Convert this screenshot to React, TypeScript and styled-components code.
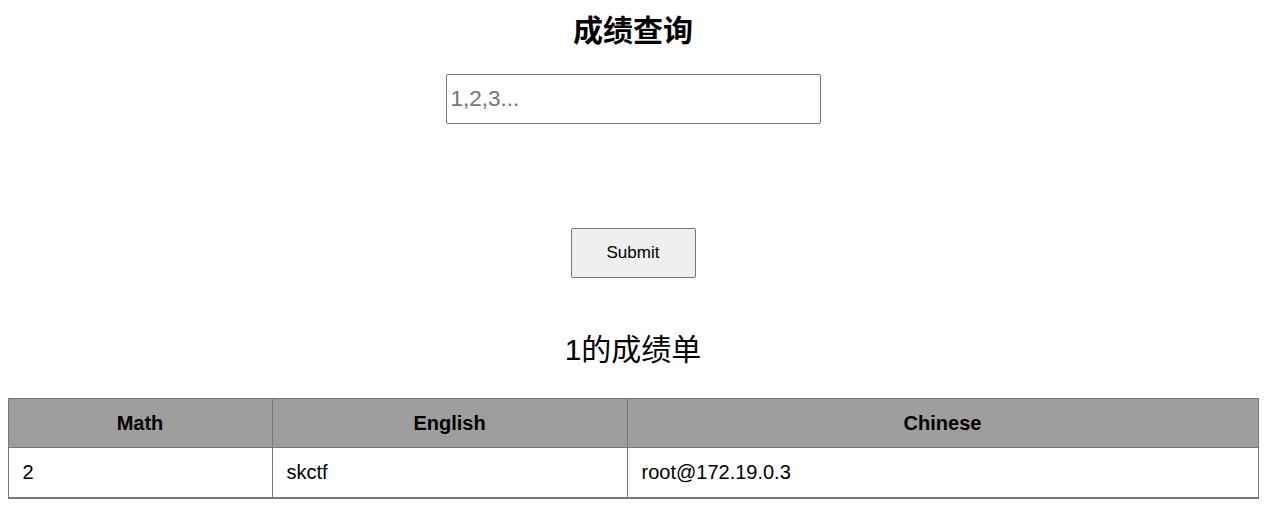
import styled, { createGlobalStyle } from "styled-components";

const GlobalStyle = createGlobalStyle`
    body {
        margin: 8px;
        background: #fff;
        font-family: "Liberation Sans", "Noto Sans CJK SC", Arial, sans-serif;
        color: #000;
    }
`;

const Page = styled.div`
    width: 1250px;
    display: flex;
    flex-direction: column;
    align-items: center;
`;

const Title = styled.h1`
    margin: 5px 0 0;
    font-size: 30px;
    line-height: 36px;
    font-weight: bold;
`;

const SearchInput = styled.input`
    margin-top: 25px;
    box-sizing: border-box;
    width: 375px;
    height: 50px;
    padding: 0 4px;
    border: 1px solid #767676;
    border-radius: 2px;
    font-family: inherit;
    font-size: 22.5px;
    &::placeholder {
        color: #757575;
    }
`;

const SubmitButton = styled.button`
    margin-top: 104px;
    box-sizing: border-box;
    width: 125px;
    height: 50px;
    background: #efefef;
    border: 1px solid #767676;
    border-radius: 2px;
    font-family: inherit;
    font-size: 17px;
    color: #000;
`;

const SubTitle = styled.h2`
    margin: 54px 0 0;
    font-size: 30px;
    line-height: 36px;
    font-weight: normal;
`;

const ScoreTable = styled.table`
    margin-top: 30px;
    width: 100%;
    table-layout: fixed;
    border-collapse: collapse;
    border: 1px solid #777;
    border-bottom-width: 2px;
    font-size: 20px;
`;

const HeadCell = styled.th<{ $w: number }>`
    box-sizing: border-box;
    width: ${(p) => p.$w}px;
    height: 49px;
    padding: 0 14px;
    background: #9e9e9e;
    border: 1px solid #777;
    font-weight: bold;
    text-align: center;
`;

const Cell = styled.td`
    height: 49px;
    padding: 0 14px;
    border: 1px solid #777;
    text-align: left;
`;

const App = () => {
    return (
        <Page>
            <GlobalStyle />
            <Title>成绩查询</Title>
            <SearchInput placeholder="1,2,3..." />
            <SubmitButton>Submit</SubmitButton>
            <SubTitle>1的成绩单</SubTitle>
            <ScoreTable>
                <thead>
                    <tr>
                        <HeadCell $w={264}>Math</HeadCell>
                        <HeadCell $w={355}>English</HeadCell>
                        <HeadCell $w={631}>Chinese</HeadCell>
                    </tr>
                </thead>
                <tbody>
                    <tr>
                        <Cell>2</Cell>
                        <Cell>skctf</Cell>
                        <Cell>root@172.19.0.3</Cell>
                    </tr>
                </tbody>
            </ScoreTable>
        </Page>
    );
};

export default App;
